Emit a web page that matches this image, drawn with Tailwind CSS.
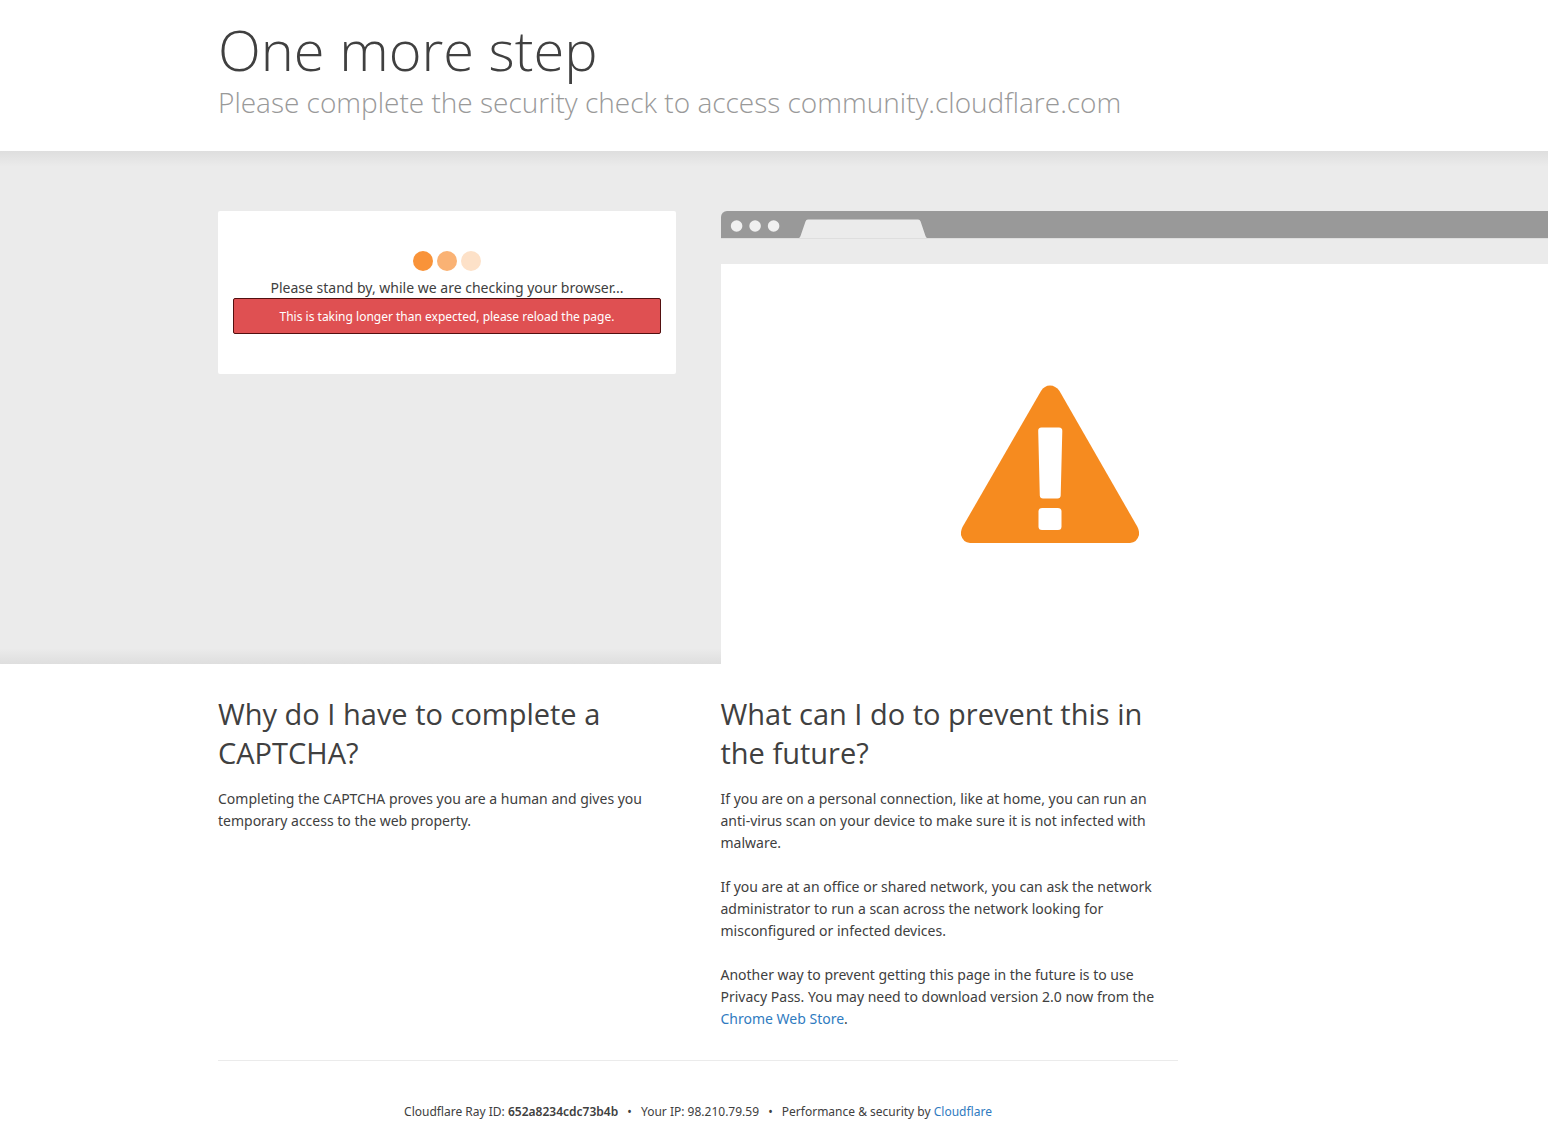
<!DOCTYPE html>
<html lang="en">
<head>
    <meta charset="UTF-8">
    <meta name="viewport" content="width=device-width, initial-scale=1.0">
    <title>Attention Required! | Cloudflare</title>
    <script src="https://cdn.jsdelivr.net/npm/@tailwindcss/browser@4"></script>
    <style>
        body { font-family: 'Noto Sans', 'Open Sans', sans-serif; }
        h1, h2 { font-family: 'Open Sans', 'Noto Sans', sans-serif; }
    </style>
</head>
<body class="bg-white text-[#404040] text-sm leading-[22px] overflow-x-hidden">

<header class="pl-[218px] pt-[15px] pb-[29px]">
    <h1 class="text-[56px] leading-[68px] font-light">One more step</h1>
    <h2 class="text-[28px] leading-[39px] font-light text-[#999999]">Please complete the security check to access community.cloudflare.com</h2>
</header>

<!-- Challenge and browser illustration -->
<section class="bg-[linear-gradient(to_bottom,#dedede,#ebebeb_3%,#ebebeb_97%,#dedede)] pl-[218px] pt-15">
    <div class="grid grid-cols-[458px_1fr] gap-[45px]">
        <div class="self-start bg-white rounded-xs px-[15px] py-10 text-center">
            <div class="flex justify-center gap-1 mb-[6px]">
                <span class="size-5 rounded-full bg-[#f99339]"></span>
                <span class="size-5 rounded-full bg-[#fab274]"></span>
                <span class="size-5 rounded-full bg-[#fde1c8]"></span>
            </div>
            <p class="leading-[21px]">Please stand by, while we are checking your browser...</p>
            <p class="bg-[#df5052] border border-[#521010] rounded-xs text-white text-xs leading-[18px] pt-[9px] pb-[7px]">This is taking longer than expected, please reload the page.</p>
        </div>

        <!-- Browser window -->
        <div>
            <div class="bg-[#999999] rounded-tl-md h-[27px] overflow-hidden">
                <svg class="block" width="220" height="27" viewBox="0 0 220 27">
                    <g fill="#f0f0f0">
                        <circle cx="15.600" cy="15" r="5.800"/>
                        <circle cx="34.100" cy="15" r="5.800"/>
                        <circle cx="52.600" cy="15" r="5.800"/>
                    </g>
                    <path fill="#ebebeb" d="M78 27 Q79 26.500 79.500 25 L84.500 10.500 Q85 8.500 87 8.500 H197 Q199 8.500 199.600 10.500 L204.500 25 Q205 26.500 206 27 Z"/>
                </svg>
            </div>
            <div class="h-[26px] bg-[#ebebeb] border-t border-[#dedede]"></div>
            <div class="bg-white h-[400px] pl-60 pt-[121px]">
                <svg width="178" height="159" viewBox="0 0 178 159" role="img" aria-label="Warning">
                    <path fill="#f68b1f" d="M80 6 Q83.500 .5 89 .5 Q94.500 .5 98.500 6 L176.500 142 Q178.500 146 178 150 Q176 157.500 169 158 H9 Q2 157.500 0 150 Q-.5 146 1.500 142 Z"/>
                    <path fill="#fff" d="M80.500 42.500 H98 Q101.500 42.500 101.300 46 L99.700 110.500 Q99.500 113.500 96.500 113.500 H82 Q79 113.500 78.800 110.500 L77.200 46 Q77 42.500 80.500 42.500 Z"/>
                    <rect x="77.500" y="123" width="23" height="22" rx="3.500" fill="#fff"/>
                </svg>
            </div>
        </div>
    </div>
</section>

<div class="ml-[218px] max-w-[960px]">
    <section class="grid grid-cols-2 gap-[45px] pt-[30px] pb-[30px]">
        <div>
            <h2 class="text-[29px] leading-[39px] mb-4">Why do I have to complete a CAPTCHA?</h2>
            <p>Completing the CAPTCHA proves you are a human and gives you temporary access to the web property.</p>
        </div>
        <div>
            <h2 class="text-[29px] leading-[39px] mb-4">What can I do to prevent this in the future?</h2>
            <p class="mb-[22px]">If you are on a personal connection, like at home, you can run an anti-virus scan on your device to make sure it is not infected with malware.</p>
            <p class="mb-[22px]">If you are at an office or shared network, you can ask the network administrator to run a scan across the network looking for misconfigured or infected devices.</p>
            <p>Another way to prevent getting this page in the future is to use Privacy Pass. You may need to download version 2.0 now from the <a href="#" class="text-[#2f7bbf]">Chrome Web Store</a>.</p>
        </div>
    </section>

    <footer class="border-t border-[#ebebeb] pt-[41px] text-center text-xs leading-5">
        <p>
            <span>Cloudflare Ray ID: <strong class="font-semibold">652a8234cdc73b4b</strong></span>
            <span class="mx-1.5">&bull;</span>
            <span>Your IP: 98.210.79.59</span>
            <span class="mx-1.5">&bull;</span>
            <span>Performance &amp; security by <a href="#" class="text-[#2f7bbf]">Cloudflare</a></span>
        </p>
    </footer>
</div>

</body>
</html>
